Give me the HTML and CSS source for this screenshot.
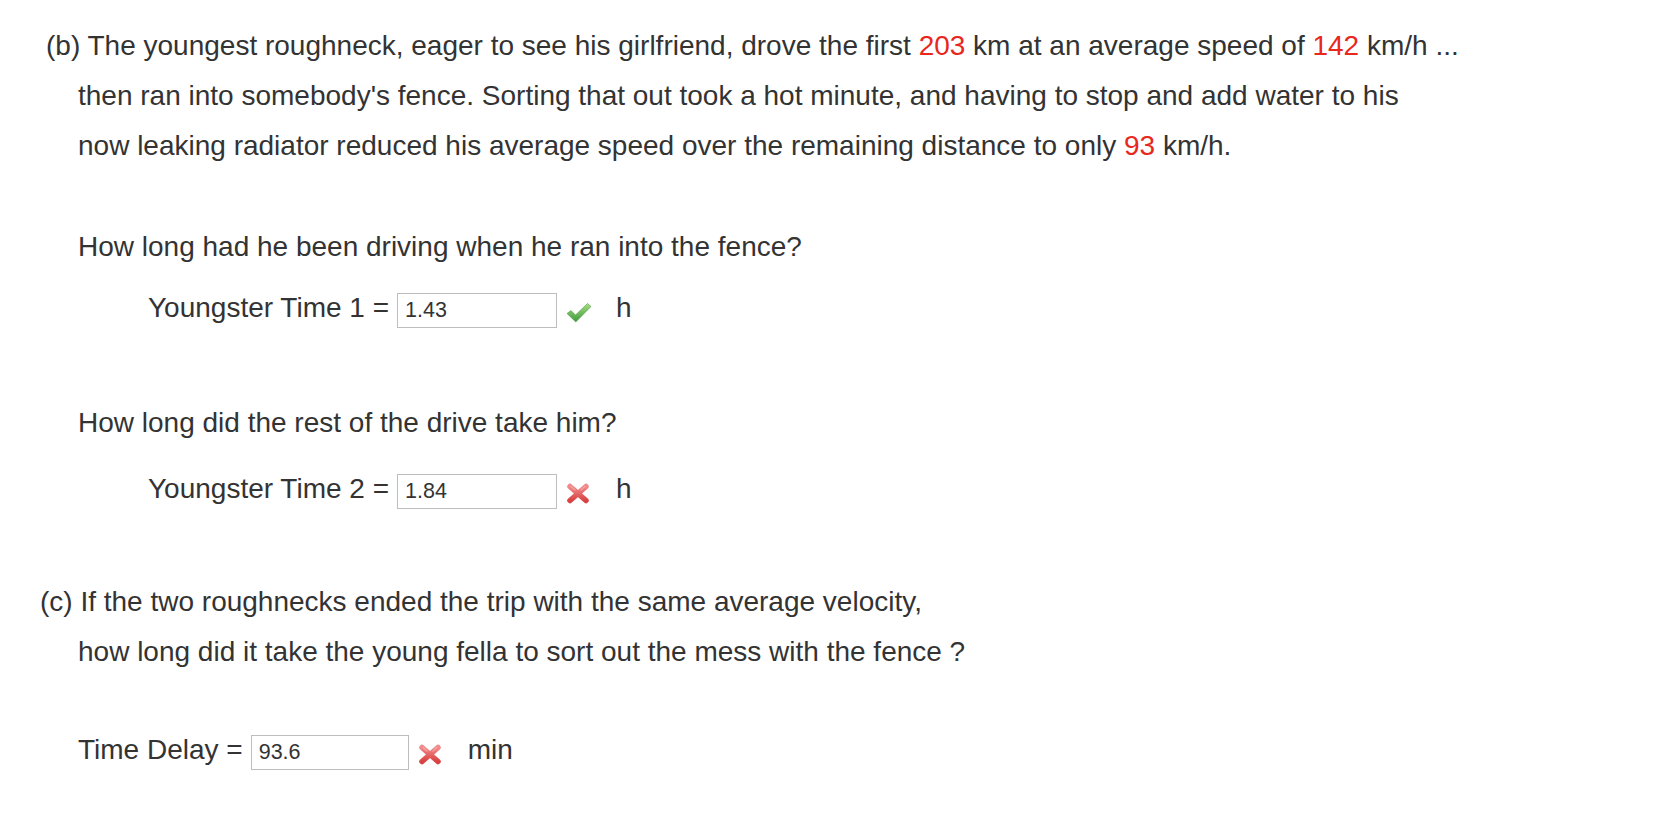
FILE: index.html
```html
<!DOCTYPE html>
<html>
<head>
<meta charset="utf-8">
<link rel="stylesheet" href="styles.css">
</head>
<body>
<div class="page">
  <p class="part part-b">(b) The youngest roughneck, eager to see his girlfriend, drove the first <span class="num">203</span> km at an average speed of <span class="num">142</span> km/h ...<br>then ran into somebody's fence. Sorting that out took a hot minute, and having to stop and add water to his<br>now leaking radiator reduced his average speed over the remaining distance to only <span class="num">93</span> km/h.</p>

  <p class="question q1">How long had he been driving when he ran into the fence?</p>
  <div class="answer row-a">
    <span class="label">Youngster Time 1 =</span><input class="field" type="text" value="1.43"><svg class="mark" width="26" height="21" viewBox="0 0 26 21"><defs><linearGradient id="gc" x1="0" y1="0" x2="0" y2="1"><stop offset="0" stop-color="#a6dd82"/><stop offset="1" stop-color="#3f9a3c"/></linearGradient></defs><path d="M1 11.5 L5 8.5 L9.5 13 L21.5 1.5 L25 4.5 L9.8 20 Z" fill="url(#gc)" stroke="#4f9e45" stroke-width="0.6" stroke-linejoin="round"/></svg><span class="unit">h</span>
  </div>

  <p class="question q2">How long did the rest of the drive take him?</p>
  <div class="answer row-b">
    <span class="label">Youngster Time 2 =</span><input class="field" type="text" value="1.84"><svg class="mark" width="26" height="21" viewBox="0 0 26 21"><defs><linearGradient id="gx1" x1="0" y1="0" x2="0" y2="1"><stop offset="0" stop-color="#f08a8a"/><stop offset="1" stop-color="#d94242"/></linearGradient></defs><g stroke="url(#gx1)" stroke-width="5.5" stroke-linecap="round"><line x1="4" y1="3.5" x2="20" y2="17.5"/><line x1="20" y1="3.5" x2="4" y2="17.5"/></g><g stroke="#f6b0b0" stroke-width="1.4" stroke-linecap="round" opacity="0.7"><line x1="5" y1="3.5" x2="9" y2="7"/><line x1="19" y1="3.5" x2="15" y2="7"/></g></svg><span class="unit">h</span>
  </div>

  <p class="part part-c">(c) If the two roughnecks ended the trip with the same average velocity,<br>how long did it take the young fella to sort out the mess with the fence ?</p>

  <div class="answer row-c">
    <span class="label">Time Delay =</span><input class="field field-narrow" type="text" value="93.6"><svg class="mark" width="26" height="21" viewBox="0 0 26 21"><defs><linearGradient id="gx2" x1="0" y1="0" x2="0" y2="1"><stop offset="0" stop-color="#f08a8a"/><stop offset="1" stop-color="#d94242"/></linearGradient></defs><g stroke="url(#gx2)" stroke-width="5.5" stroke-linecap="round"><line x1="4" y1="3.5" x2="20" y2="17.5"/><line x1="20" y1="3.5" x2="4" y2="17.5"/></g><g stroke="#f6b0b0" stroke-width="1.4" stroke-linecap="round" opacity="0.7"><line x1="5" y1="3.5" x2="9" y2="7"/><line x1="19" y1="3.5" x2="15" y2="7"/></g></svg><span class="unit">min</span>
  </div>
</div>
</body>
</html>
```

FILE: styles.css
```css
html, body {
  margin: 0;
  padding: 0;
  background: #ffffff;
}

body {
  font-family: "Liberation Sans", Arial, Helvetica, sans-serif;
  font-size: 28px;
  line-height: 50px;
  color: #333333;
}

.page {
  padding-top: 21px;
  width: 1674px;
}

p {
  margin: 0;
}

.part {
  white-space: nowrap;
  padding-left: 78px;
  text-indent: -38px;
}

.part-b {
  text-indent: -32px;
}

.part-c {
  margin-top: 63px;
}

.num {
  color: #e8271d;
}

.question {
  padding-left: 78px;
}

.q1 {
  margin-top: 51px;
}

.q2 {
  margin-top: 65px;
}

.answer {
  white-space: nowrap;
}

.row-a {
  margin-top: 11px;
  padding-left: 148px;
}

.row-b {
  margin-top: 16px;
  padding-left: 148px;
}

.row-c {
  margin-top: 48px;
  padding-left: 78px;
}

.field {
  box-sizing: border-box;
  width: 160px;
  height: 35px;
  margin: 0 0 0 8px;
  padding: 0 7px;
  border: 1px solid #bdbdbd;
  border-radius: 0;
  font-family: "Liberation Sans", Arial, Helvetica, sans-serif;
  font-size: 21.5px;
  color: #333333;
  background: #ffffff;
  outline: none;
}

.field-narrow {
  width: 158px;
}

.mark {
  margin-left: 9px;
  vertical-align: -6px;
}

.unit {
  margin-left: 24px;
}
```
